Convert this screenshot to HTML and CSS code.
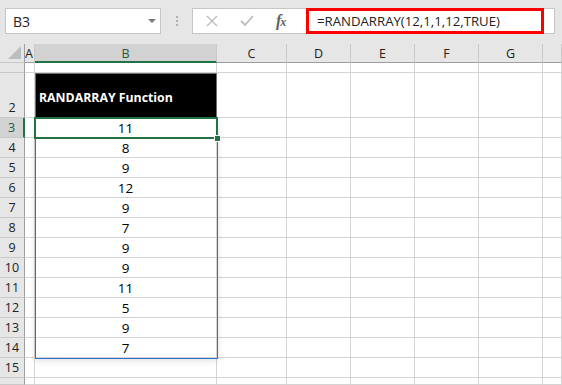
FILE: index.html
```html
<!DOCTYPE html>
<html>
<head>
<meta charset="utf-8">
<link rel="stylesheet" href="styles.css">
</head>
<body>
<div class="toolbar">
  <div class="namebox">
    <span class="nb-text">B3</span>
    <svg class="nb-arrow" width="8" height="5" viewBox="0 0 8 5"><polygon points="0,0 8,0 4,4" fill="#7a7a7a"/></svg>
  </div>
  <div class="dots"><i></i><i></i><i></i></div>
  <div class="fbar">
    <div class="fbtns">
      <svg class="ico" width="14" height="14" viewBox="0 0 14 14"><path d="M2 2 L12 12 M12 2 L2 12" stroke="#bcbcbc" stroke-width="1.4" fill="none"/></svg>
      <svg class="ico" width="16" height="14" viewBox="0 0 16 14"><path d="M2 7 L6 11 L14 2" stroke="#bcbcbc" stroke-width="1.8" fill="none"/></svg>
      <span class="fx">f<span class="fxx">x</span></span>
    </div>
    <div class="finput"><span class="ftext">=RANDARRAY(12,1,1,12,TRUE)</span></div>
  </div>
</div>
<div class="sheet">
  <div class="row hdr">
    <div class="c ch corner"><svg width="14" height="14" viewBox="0 0 14 14"><polygon points="13,0 13,13 0,13" fill="#bdbdbd"/></svg></div>
    <div class="c ca">A</div>
    <div class="c cb sel">B</div>
    <div class="c cc">C</div>
    <div class="c cd">D</div>
    <div class="c cd">E</div>
    <div class="c cd">F</div>
    <div class="c cd">G</div>
    <div class="c cz"></div>
  </div>
  <div class="row r1">
    <div class="c ch"></div><div class="c ca"></div><div class="c cb"></div><div class="c cc"></div><div class="c cd"></div><div class="c cd"></div><div class="c cd"></div><div class="c cd"></div><div class="c cz"></div>
  </div>
  <div class="row r2">
    <div class="c ch">2</div><div class="c ca"></div><div class="c cb title">RANDARRAY Function</div><div class="c cc"></div><div class="c cd"></div><div class="c cd"></div><div class="c cd"></div><div class="c cd"></div><div class="c cz"></div>
  </div>
  <div class="row"><div class="c ch selrow">3</div><div class="c ca"></div><div class="c cb num">11</div><div class="c cc"></div><div class="c cd"></div><div class="c cd"></div><div class="c cd"></div><div class="c cd"></div><div class="c cz"></div></div>
  <div class="row"><div class="c ch">4</div><div class="c ca"></div><div class="c cb num">8</div><div class="c cc"></div><div class="c cd"></div><div class="c cd"></div><div class="c cd"></div><div class="c cd"></div><div class="c cz"></div></div>
  <div class="row"><div class="c ch">5</div><div class="c ca"></div><div class="c cb num">9</div><div class="c cc"></div><div class="c cd"></div><div class="c cd"></div><div class="c cd"></div><div class="c cd"></div><div class="c cz"></div></div>
  <div class="row"><div class="c ch">6</div><div class="c ca"></div><div class="c cb num">12</div><div class="c cc"></div><div class="c cd"></div><div class="c cd"></div><div class="c cd"></div><div class="c cd"></div><div class="c cz"></div></div>
  <div class="row"><div class="c ch">7</div><div class="c ca"></div><div class="c cb num">9</div><div class="c cc"></div><div class="c cd"></div><div class="c cd"></div><div class="c cd"></div><div class="c cd"></div><div class="c cz"></div></div>
  <div class="row"><div class="c ch">8</div><div class="c ca"></div><div class="c cb num">7</div><div class="c cc"></div><div class="c cd"></div><div class="c cd"></div><div class="c cd"></div><div class="c cd"></div><div class="c cz"></div></div>
  <div class="row"><div class="c ch">9</div><div class="c ca"></div><div class="c cb num">9</div><div class="c cc"></div><div class="c cd"></div><div class="c cd"></div><div class="c cd"></div><div class="c cd"></div><div class="c cz"></div></div>
  <div class="row"><div class="c ch">10</div><div class="c ca"></div><div class="c cb num">9</div><div class="c cc"></div><div class="c cd"></div><div class="c cd"></div><div class="c cd"></div><div class="c cd"></div><div class="c cz"></div></div>
  <div class="row"><div class="c ch">11</div><div class="c ca"></div><div class="c cb num">11</div><div class="c cc"></div><div class="c cd"></div><div class="c cd"></div><div class="c cd"></div><div class="c cd"></div><div class="c cz"></div></div>
  <div class="row"><div class="c ch">12</div><div class="c ca"></div><div class="c cb num">5</div><div class="c cc"></div><div class="c cd"></div><div class="c cd"></div><div class="c cd"></div><div class="c cd"></div><div class="c cz"></div></div>
  <div class="row"><div class="c ch">13</div><div class="c ca"></div><div class="c cb num">9</div><div class="c cc"></div><div class="c cd"></div><div class="c cd"></div><div class="c cd"></div><div class="c cd"></div><div class="c cz"></div></div>
  <div class="row"><div class="c ch">14</div><div class="c ca"></div><div class="c cb num">7</div><div class="c cc"></div><div class="c cd"></div><div class="c cd"></div><div class="c cd"></div><div class="c cd"></div><div class="c cz"></div></div>
  <div class="row"><div class="c ch">15</div><div class="c ca"></div><div class="c cb"></div><div class="c cc"></div><div class="c cd"></div><div class="c cd"></div><div class="c cd"></div><div class="c cd"></div><div class="c cz"></div></div>
  <div class="row rlast"><div class="c ch"></div><div class="c ca"></div><div class="c cb"></div><div class="c cc"></div><div class="c cd"></div><div class="c cd"></div><div class="c cd"></div><div class="c cd"></div><div class="c cz"></div></div>
  <div class="spill"></div>
  <div class="cursor"><span class="handle"></span></div>
</div>
</body>
</html>
```

FILE: styles.css
```css
* { box-sizing: border-box; }
html, body { margin: 0; padding: 0; }
body {
  width: 562px;
  height: 385px;
  overflow: hidden;
  background: #fff;
  font-family: "Open Sans", "Noto Sans", sans-serif;
}
.toolbar {
  height: 44px;
  background: #e6e6e6;
  display: flex;
  align-items: flex-start;
  padding-top: 8px;
  padding-left: 5px;
}
.namebox {
  width: 156px;
  height: 26px;
  background: #fff;
  border: 1px solid #c6c6c6;
  display: flex;
  align-items: center;
  justify-content: space-between;
  padding: 0 4px 0 7px;
}
.nb-text { font-size: 14px; color: #222; }
.nb-arrow { margin-top: 1px; }
.dots {
  width: 31px;
  height: 26px;
  display: flex;
  flex-direction: column;
  align-items: center;
  justify-content: center;
  gap: 2px;
}
.dots i { display: block; width: 2px; height: 2px; background: #b0b0b0; }
.fbar {
  width: 363px;
  height: 26px;
  background: #fff;
  border: 1px solid #c6c6c6;
  display: flex;
  align-items: stretch;
}
.fbtns {
  width: 113px;
  display: flex;
  align-items: center;
  padding-left: 12px;
}
.fbtns .ico { margin-right: 20px; }
.fbtns .ico + .ico { margin-right: 21px; }
.fx {
  font-family: "Liberation Serif", serif;
  font-style: italic;
  font-size: 16px;
  color: #606060;
  font-weight: bold;
  letter-spacing: -1px;
}
.fxx { font-size: 12px; }
.finput {
  width: 238px;
  height: 26px;
  margin-top: -1px;
  border: 3px solid #ff0000;
  display: flex;
  align-items: center;
  padding-left: 8px;
}
.ftext { font-size: 13.2px; color: #222; white-space: nowrap; }

.sheet { position: relative; }
.row { display: flex; height: 20px; }
.row.hdr { height: 19px; }
.row.r1 { height: 10px; }
.row.r2 { height: 45px; }
.row.rlast { height: 7px; }
.c {
  flex: none;
  height: 100%;
  border-right: 1px solid #d4d4d4;
  border-bottom: 1px solid #d4d4d4;
  display: flex;
  align-items: center;
  justify-content: center;
  font-size: 13px;
  color: #000;
  overflow: hidden;
}
.ch { width: 25px; }
.ca { width: 10px; }
.cb { width: 182px; }
.cc { width: 70px; }
.cd { width: 64px; }
.cz { flex: 1; }

.hdr .c {
  background: #e6e6e6;
  border-right: 1px solid #c9c9c9;
  border-bottom: 1px solid #9e9e9e;
  font-size: 12.5px;
  color: #222;
  padding-top: 1px;
}
.hdr .c.sel {
  background: #d2d2d2;
  border-bottom: 2px solid #217346;
  color: #215a3a;
}
.hdr .corner {
  align-items: flex-end;
  justify-content: flex-end;
  padding: 0 2px 2px 0;
  border-right: 1px solid #9e9e9e;
}
.hdr .ca { justify-content: flex-start; padding-left: 0; }
.ch {
  background: #e6e6e6;
  border-right: 1px solid #9e9e9e !important;
  border-bottom: 1px solid #c9c9c9 !important;
  font-size: 12.5px;
  color: #222;
}
.ch.selrow {
  background: #d2d2d2;
  border-right: 2px solid #217346 !important;
  color: #215a3a;
}
.r2 .ch { align-items: flex-end; padding-bottom: 1px; }
.title {
  background: #000;
  color: #fff;
  font-weight: bold;
  font-size: 12.3px;
  justify-content: flex-start;
  padding-left: 3px;
  border: 1px solid #6e6e6e;
  border-bottom-color: #d4d4d4;
  padding-top: 3px;
}
.num { font-size: 13.5px; }

.spill {
  position: absolute;
  left: 35px;
  top: 74px;
  width: 183px;
  height: 241px;
  border: 1px solid #2f6fcf;
  box-shadow: 0 2px 6px rgba(0,0,0,0.12);
  pointer-events: none;
}
.cursor {
  position: absolute;
  left: 34px;
  top: 73px;
  width: 184px;
  height: 22px;
  border: 2px solid #217346;
}
.handle {
  position: absolute;
  right: -5px;
  bottom: -5px;
  width: 7px;
  height: 7px;
  background: #217346;
  border: 1px solid #fff;
}
```
